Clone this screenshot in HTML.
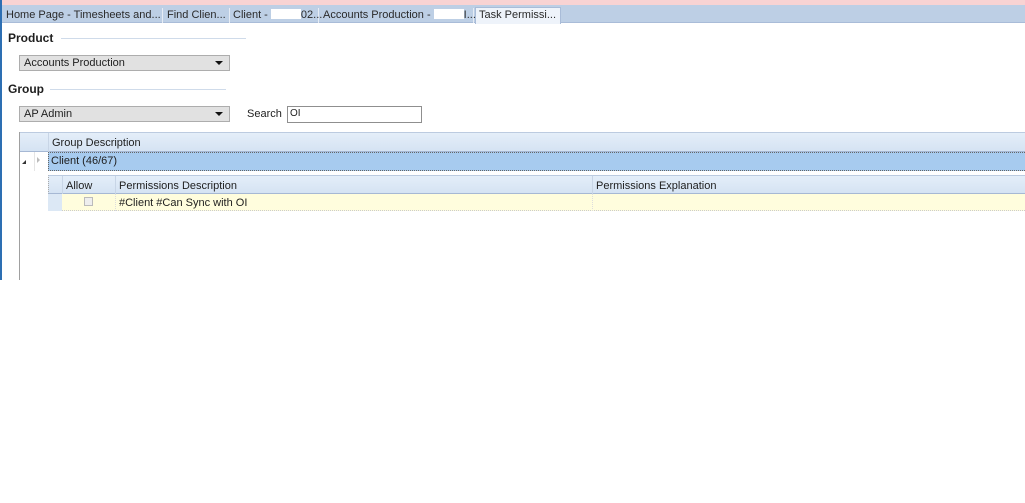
<!DOCTYPE html>
<html><head><style>
*{margin:0;padding:0;box-sizing:border-box}
body{width:1025px;height:503px;background:#fff;font-family:"Liberation Sans",Arial,sans-serif;font-size:11px;color:#1e1e1e;position:relative;overflow:hidden}
.a{position:absolute}
.tab{position:absolute;top:8px;height:15px;line-height:14px;padding-left:3px;border-right:1px solid #e6ecf5;white-space:nowrap;font-size:11px;color:#2a2a2a}
.dd{position:absolute;left:19px;width:211px;height:16px;background:#e1e1e1;border:1px solid #adadad;padding-left:4px;line-height:14px}
.dd:after{content:"";position:absolute;right:6px;top:5px;border-left:4px solid transparent;border-right:4px solid transparent;border-top:4px solid #111}
.hd{background:linear-gradient(#e4eef9,#d5e3f3);border-bottom:1px solid #a6b8d4}
</style></head><body>
<div class="a" style="left:0;top:0;width:1025px;height:5px;background:#f8d3d3"></div>
<div class="a" style="left:0;top:5px;width:1025px;height:18px;background:#bdcfe5;border-bottom:1px solid #a9bcd8"></div>
<div class="a" style="left:0;top:0;width:2px;height:280px;background:#2d6fb3"></div>
<div class="tab" style="left:3px;width:160px">Home Page - Timesheets and...</div>
<div class="tab" style="left:164px;width:66px">Find Clien...</div>
<div class="tab" style="left:230px;width:89px">Client - <span style="background:#fff;display:inline-block;width:30px;height:10px;vertical-align:-1px"></span>02...</div>
<div class="tab" style="left:320px;width:154px">Accounts Production - <span style="background:#fff;display:inline-block;width:30px;height:10px;vertical-align:-1px"></span>I...</div>
<div class="tab" style="left:475px;top:7px;height:17px;width:86px;background:#eef3fa;border:1px solid #a9bcd8;border-bottom:none">Task Permissi...</div>
<div class="a" style="left:8px;top:31px;font-weight:bold;font-size:12px">Product</div>
<div class="a" style="left:61px;top:38px;width:185px;height:1px;background:#cfdbea"></div>
<div class="dd" style="top:55px">Accounts Production</div>
<div class="a" style="left:8px;top:82px;font-weight:bold;font-size:12px">Group</div>
<div class="a" style="left:50px;top:89px;width:176px;height:1px;background:#cfdbea"></div>
<div class="dd" style="top:106px">AP Admin</div>
<div class="a" style="left:247px;top:108px">Search</div>
<div class="a" style="left:287px;top:106px;width:135px;height:17px;border:1px solid #8f8f8f;padding-left:2px;line-height:14px;font-size:10px">OI</div>
<div class="a" style="left:19px;top:132px;width:1px;height:148px;background:#a0a0a0"></div>
<div class="a hd" style="left:20px;top:132px;width:1005px;height:20px;border-top:1px solid #bccbe0"></div>
<div class="a" style="left:48px;top:133px;width:1px;height:19px;background:#c8d5e6"></div>
<div class="a" style="left:52px;top:137px">Group Description</div>
<div class="a" style="left:48px;top:152px;width:977px;height:19px;background:#a7cbef;border-top:1px dotted #666;border-bottom:1px dotted #666;border-left:1px dotted #666"></div>
<div class="a" style="left:51px;top:155px">Client (46/67)</div>
<div class="a" style="left:22px;top:160px;width:0;height:0;border-left:4px solid transparent;border-bottom:4px solid #333"></div>
<div class="a" style="left:37px;top:157px;width:0;height:0;border-top:3px solid transparent;border-bottom:3px solid transparent;border-left:3px solid #bbb"></div>
<div class="a" style="left:34px;top:152px;width:1px;height:19px;background:#e5e5e5"></div>
<div class="a hd" style="left:48px;top:175px;width:977px;height:19px;border-top:1px solid #bccbe0;border-left:1px dotted #aaa"></div>
<div class="a" style="left:62px;top:176px;width:1px;height:18px;background:#c8d5e6"></div>
<div class="a" style="left:115px;top:176px;width:1px;height:18px;background:#c8d5e6"></div>
<div class="a" style="left:592px;top:176px;width:1px;height:18px;background:#c8d5e6"></div>
<div class="a" style="left:66px;top:180px">Allow</div>
<div class="a" style="left:119px;top:180px">Permissions Description</div>
<div class="a" style="left:596px;top:180px">Permissions Explanation</div>
<div class="a" style="left:48px;top:194px;width:977px;height:17px;background:#fffddd;border-bottom:1px dotted #ccc"></div>
<div class="a" style="left:48px;top:194px;width:14px;height:17px;background:#dce8f5"></div>
<div class="a" style="left:115px;top:194px;width:1px;height:17px;border-left:1px dotted #ddd"></div>
<div class="a" style="left:592px;top:194px;width:1px;height:17px;border-left:1px dotted #ddd"></div>
<div class="a" style="left:84px;top:197px;width:9px;height:9px;border:1px solid #bbb;background:#eee"></div>
<div class="a" style="left:119px;top:197px">#Client #Can Sync with OI</div>
</body></html>
